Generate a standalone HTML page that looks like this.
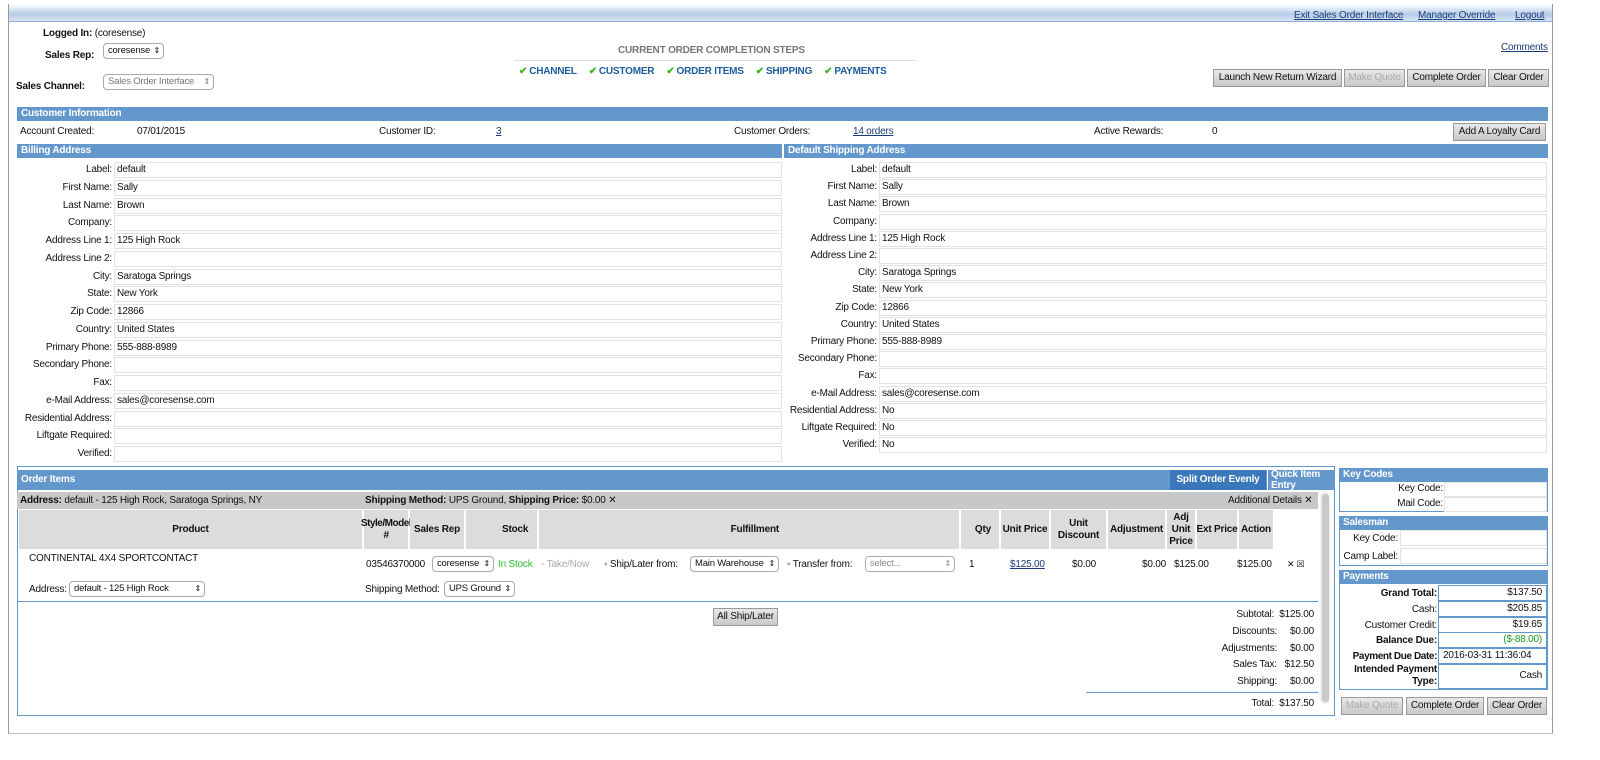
<!DOCTYPE html>
<html><head><meta charset="utf-8"><style>
*{box-sizing:border-box;margin:0;padding:0}
body{width:1600px;height:760px;background:#fff;font-family:"Liberation Sans",Arial,sans-serif;font-size:10px;letter-spacing:-0.2px;color:#111;position:relative;overflow:hidden}
div{white-space:nowrap}
.a{position:absolute;white-space:nowrap}
.hdr{position:absolute;background:#6497cc;color:#fff;font-weight:bold;font-size:10px;padding-left:4px;line-height:14px}
.lnk{color:#1a3c78;text-decoration:underline}
.btn{position:absolute;background:linear-gradient(#e8e8e8,#c8c8c8);border:1px solid #999;font-size:10px;text-align:center;line-height:16px;height:18px;overflow:hidden}
.dis{color:#aaa}
.sel{position:absolute;border:1px solid #aaa;border-radius:4px;background:#fff;font-size:9.5px;line-height:14px;height:16px;padding-left:4px;overflow:hidden}
.sel:after{content:"⇕";position:absolute;right:3px;font-size:8px}
.lb{position:absolute;text-align:right;white-space:nowrap}
.vb{position:absolute;border:1px solid #e2e2e2;height:16px;line-height:14px;padding-left:2px}
.chk{color:#3cb521;font-style:normal;margin-right:2px}
.steps span{margin-right:12px}
.th{position:absolute;background:#dcdcdc;font-weight:bold;text-align:center;display:flex;align-items:center;justify-content:center;line-height:12px;white-space:normal}
.pv{position:absolute;border:1px solid #6497cc;height:16px;line-height:14px;text-align:right;padding-right:4px;background:#fff}
</style></head><body>
<div class="a" style="left:8px;top:4px;width:1545px;height:18px;background:linear-gradient(#fff,#b7cde8 60%,#d8e4f2);border-bottom:1px solid #8fb0d8"></div>
<div class="a" style="left:8px;top:4px;width:1px;height:730px;background:#999"></div>
<div class="a" style="left:1552px;top:4px;width:1px;height:730px;background:#999"></div>
<div class="a" style="left:8px;top:733px;width:1545px;height:1px;background:#bbb"></div>
<div class="a lnk" style="left:1294px;top:10px">Exit Sales Order Interface</div>
<div class="a lnk" style="left:1418px;top:10px">Manager Override</div>
<div class="a lnk" style="left:1515px;top:10px">Logout</div>
<div class="a" style="left:43px;top:28px"><b>Logged In:</b> (coresense)</div>
<div class="a" style="left:45px;top:50px"><b>Sales Rep:</b></div>
<div class="sel" style="left:103px;top:43px;width:61px">coresense</div>
<div class="a" style="left:16px;top:81px"><b>Sales Channel:</b></div>
<div class="sel" style="left:103px;top:74px;width:111px;color:#777">Sales Order Interface</div>
<div class="a" style="left:618px;top:45px;color:#777;font-weight:bold">CURRENT ORDER COMPLETION STEPS</div>
<div class="a" style="left:514px;top:60px;width:402px;height:1px;background:#ddd"></div>
<div class="a steps" style="left:519px;top:66px;color:#1d5d9b;font-weight:bold"><span><i class="chk">✔</i>CHANNEL</span><span><i class="chk">✔</i>CUSTOMER</span><span><i class="chk">✔</i>ORDER ITEMS</span><span><i class="chk">✔</i>SHIPPING</span><span><i class="chk">✔</i>PAYMENTS</span></div>
<div class="a lnk" style="left:1501px;top:42px">Comments</div>
<div class="btn" style="left:1213px;top:69px;width:129px">Launch New Return Wizard</div>
<div class="btn dis" style="left:1344px;top:69px;width:61px">Make Quote</div>
<div class="btn" style="left:1407px;top:69px;width:79px">Complete Order</div>
<div class="btn" style="left:1488px;top:69px;width:61px">Clear Order</div>

<div class="hdr" style="left:17px;top:107px;width:1531px">Customer Information</div>
<div class="a" style="left:20px;top:126px">Account Created:</div>
<div class="a" style="left:137px;top:126px">07/01/2015</div>
<div class="a" style="left:379px;top:126px">Customer ID:</div>
<div class="a lnk" style="left:496px;top:126px">3</div>
<div class="a" style="left:734px;top:126px">Customer Orders:</div>
<div class="a lnk" style="left:853px;top:126px">14 orders</div>
<div class="a" style="left:1094px;top:126px">Active Rewards:</div>
<div class="a" style="left:1212px;top:126px">0</div>
<div class="btn" style="left:1453px;top:123px;width:93px">Add A Loyalty Card</div>

<div class="hdr" style="left:17px;top:144px;width:765px">Billing Address</div>
<div class="hdr" style="left:784px;top:144px;width:764px">Default Shipping Address</div>
<div id="bill"></div>

<div class="a" style="left:17px;top:466px;width:1318px;height:250px;border:1px solid #6497cc"></div>
<div class="hdr" style="left:17px;top:470px;width:1318px;height:20px;line-height:20px">Order Items</div>
<div class="a" style="left:1170px;top:470px;width:96px;height:20px;background:#3a78bb;color:#fff;font-weight:bold;text-align:center;line-height:20px">Split Order Evenly</div>
<div class="a" style="left:1267px;top:469px;width:68px;color:#fff;font-weight:bold;line-height:11px;padding-left:3px;border-left:1px solid #fff;height:21px">Quick Item<br>Entry</div>
<div class="a" style="left:17px;top:492px;width:1301px;height:17px;background:#c8c8c8;line-height:17px;padding-left:3px"><b>Address:</b> default - 125 High Rock, Saratoga Springs, NY</div>
<div class="a" style="left:365px;top:492px;line-height:17px"><b>Shipping Method:</b> UPS Ground, <b>Shipping Price:</b> $0.00 ✕</div>
<div class="a" style="left:1228px;top:492px;line-height:17px">Additional Details ✕</div>
<div class="a" style="left:1320px;top:492px;width:10px;height:212px;background:#eee;border-radius:5px"></div>
<div class="a" style="left:1322px;top:494px;width:7px;height:208px;background:#c8c8c8;border-radius:4px"></div>
<div class="th" style="left:19px;top:510px;width:343px;height:39px">Product</div>
<div class="th" style="left:364px;top:510px;width:44px;height:39px;letter-spacing:-0.5px">Style/Model #</div>
<div class="th" style="left:410px;top:510px;width:54px;height:39px">Sales Rep</div>
<div class="th" style="left:466px;top:510px;width:71px;height:39px;justify-content:flex-start;padding-left:36px">Stock</div>
<div class="th" style="left:539px;top:510px;width:420px;height:39px;justify-content:flex-end;padding-right:180px">Fulfillment</div>
<div class="th" style="left:961px;top:510px;width:38px;height:39px;justify-content:flex-end;padding-right:8px">Qty</div>
<div class="th" style="left:1001px;top:510px;width:48px;height:39px">Unit&nbsp;Price</div>
<div class="th" style="left:1051px;top:510px;height:39px;width:55px">Unit Discount</div>
<div class="th" style="left:1108px;top:510px;width:57px;height:39px">Adjustment</div>
<div class="th" style="left:1167px;top:510px;height:39px;width:28px">Adj Unit Price</div>
<div class="th" style="left:1197px;top:510px;height:39px;width:40px">Ext&nbsp;Price</div>
<div class="th" style="left:1239px;top:510px;width:34px;height:39px">Action</div>
<div class="a" style="left:29px;top:553px">CONTINENTAL 4X4 SPORTCONTACT</div>
<div class="a" style="left:366px;top:559px">03546370000</div>
<div class="sel" style="left:432px;top:556px;width:62px">coresense</div>
<div class="a" style="left:498px;top:559px;color:#2bbf2b">In Stock</div>
<div class="a" style="left:541px;top:559px;color:#aaa">◦ Take/Now</div>
<div class="a" style="left:604px;top:559px">◦ Ship/Later from:</div>
<div class="sel" style="left:690px;top:556px;width:89px">Main Warehouse</div>
<div class="a" style="left:787px;top:559px">◦ Transfer from:</div>
<div class="sel" style="left:865px;top:556px;width:90px;color:#888">select...</div>
<div class="a" style="left:969px;top:559px">1</div>
<div class="a lnk" style="left:1010px;top:559px">$125.00</div>
<div class="a" style="left:1072px;top:559px">$0.00</div>
<div class="a" style="left:1142px;top:559px">$0.00</div>
<div class="a" style="left:1174px;top:559px">$125.00</div>
<div class="a" style="left:1237px;top:559px">$125.00</div>
<div class="a" style="left:1287px;top:559px;font-size:9px">✕ ☒</div>
<div class="a" style="left:29px;top:584px">Address:</div>
<div class="sel" style="left:69px;top:581px;width:136px">default - 125 High Rock</div>
<div class="a" style="left:365px;top:584px">Shipping Method:</div>
<div class="sel" style="left:444px;top:581px;width:71px">UPS Ground</div>
<div class="a" style="left:17px;top:601px;width:1301px;height:1px;background:#6497cc"></div>
<div class="btn" style="left:713px;top:608px;width:65px">All Ship/Later</div>
<div class="lb" style="left:1150px;top:609px;width:164px">Subtotal:&nbsp; $125.00</div>
<div class="lb" style="left:1150px;top:626px;width:164px">Discounts:&nbsp;&nbsp;&nbsp;&nbsp; $0.00</div>
<div class="lb" style="left:1150px;top:643px;width:164px">Adjustments:&nbsp;&nbsp;&nbsp;&nbsp; $0.00</div>
<div class="lb" style="left:1150px;top:659px;width:164px">Sales Tax:&nbsp;&nbsp; $12.50</div>
<div class="lb" style="left:1150px;top:676px;width:164px">Shipping:&nbsp;&nbsp;&nbsp;&nbsp; $0.00</div>
<div class="a" style="left:1086px;top:692px;width:232px;height:1px;background:#6497cc"></div>
<div class="lb" style="left:1150px;top:698px;width:164px">Total:&nbsp; $137.50</div>

<div class="a" style="left:1339px;top:468px;width:209px;height:44px;border:1px solid #6497cc"></div>
<div class="hdr" style="left:1339px;top:468px;width:209px">Key Codes</div>
<div class="lb" style="left:1340px;top:483px;width:103px">Key Code:</div><div class="vb" style="left:1444px;top:482px;width:103px"></div>
<div class="lb" style="left:1340px;top:498px;width:103px">Mail Code:</div><div class="vb" style="left:1444px;top:496px;width:103px"></div>
<div class="a" style="left:1339px;top:516px;width:209px;height:50px;border:1px solid #6497cc"></div>
<div class="hdr" style="left:1339px;top:516px;width:209px">Salesman</div>
<div class="lb" style="left:1340px;top:533px;width:58px">Key Code:</div><div class="vb" style="left:1400px;top:530px;width:147px"></div>
<div class="lb" style="left:1340px;top:551px;width:58px">Camp Label:</div><div class="vb" style="left:1400px;top:548px;width:147px"></div>
<div class="a" style="left:1339px;top:570px;width:209px;height:120px;border:1px solid #6497cc"></div>
<div class="hdr" style="left:1339px;top:570px;width:209px">Payments</div>
<div class="lb" style="left:1340px;top:588px;width:97px;font-weight:bold">Grand Total:</div><div class="pv" style="left:1438px;top:585px;width:109px">$137.50</div>
<div class="lb" style="left:1340px;top:604px;width:97px">Cash:</div><div class="pv" style="left:1438px;top:601px;width:109px">$205.85</div>
<div class="lb" style="left:1340px;top:620px;width:97px">Customer Credit:</div><div class="pv" style="left:1438px;top:617px;width:109px">$19.65</div>
<div class="lb" style="left:1340px;top:635px;width:97px;font-weight:bold">Balance Due:</div><div class="pv" style="left:1438px;top:632px;width:109px;color:#1a9a1a">($-88.00)</div>
<div class="lb" style="left:1340px;top:651px;width:97px;font-weight:bold;letter-spacing:-0.4px">Payment Due Date:</div><div class="pv" style="left:1438px;top:648px;width:109px;text-align:left;padding-left:4px">2016-03-31 11:36:04</div>
<div class="lb" style="left:1340px;top:664px;width:97px;font-weight:bold;line-height:12px">Intended Payment<br>Type:</div><div class="pv" style="left:1438px;top:664px;width:109px;height:25px;line-height:22px">Cash</div>
<div class="btn dis" style="left:1341px;top:697px;width:62px">Make Quote</div>
<div class="btn" style="left:1406px;top:697px;width:78px">Complete Order</div>
<div class="btn" style="left:1487px;top:697px;width:60px">Clear Order</div>

<script>
var L=["Label:","First Name:","Last Name:","Company:","Address Line 1:","Address Line 2:","City:","State:","Zip Code:","Country:","Primary Phone:","Secondary Phone:","Fax:","e-Mail Address:","Residential Address:","Liftgate Required:","Verified:"];
var B=["default","Sally","Brown","","125 High Rock","","Saratoga Springs","New York","12866","United States","555-888-8989","","","sales@coresense.com","","",""];
var S=["default","Sally","Brown","","125 High Rock","","Saratoga Springs","New York","12866","United States","555-888-8989","","","sales@coresense.com","No","No","No"];
var h="";
for(var i=0;i<17;i++){var y=161+i*17.75;h+='<div class="lb" style="left:17px;top:'+(y+3)+'px;width:95px">'+L[i]+'</div><div class="vb" style="left:114px;top:'+(y+1)+'px;width:668px">'+B[i]+'</div>';
var z=161+i*17.2;h+='<div class="lb" style="left:784px;top:'+(z+3)+'px;width:93px">'+L[i]+'</div><div class="vb" style="left:879px;top:'+(z+1)+'px;width:668px">'+S[i]+'</div>';}
document.getElementById("bill").innerHTML=h;
</script>
</body></html>
